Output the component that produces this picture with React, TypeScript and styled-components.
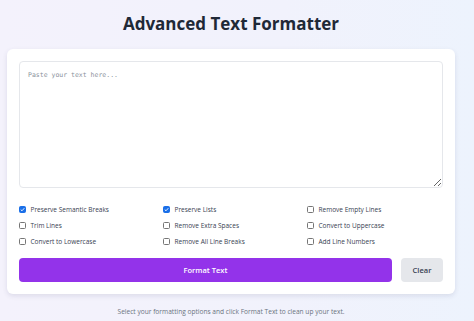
import React, { useState } from 'react';
import styled, { createGlobalStyle } from 'styled-components';

const GlobalStyle = createGlobalStyle`
  html, body {
    margin: 0;
    padding: 0;
  }
  body {
    font-family: "Open Sans", "Noto Sans", sans-serif;
    background: linear-gradient(90deg, #f4f2fc 0%, #f1f2fc 60%, #edf3fd 100%);
    min-height: 321px;
  }
`;

const Page = styled.div`
  width: 448px;
  padding: 0 19px 0 7px;
`;

const Title = styled.h1`
  margin: 0;
  padding: 12px 0 13px;
  font-size: 17px;
  line-height: 24px;
  font-weight: 700;
  text-align: center;
  color: #1f2937;
`;

const Card = styled.div`
  background: #fff;
  border-radius: 6px;
  padding: 12px;
  box-shadow: 0 2px 5px rgba(60, 60, 100, 0.12);
`;

const TextArea = styled.textarea`
  display: block;
  box-sizing: border-box;
  width: 100%;
  height: 127px;
  margin: 0;
  padding: 9px 8px 7px;
  border: 1px solid #e5e7eb;
  border-radius: 4px;
  font-family: "DejaVu Sans Mono", "Liberation Mono", monospace;
  font-size: 6.5px;
  color: #374151;
  outline: none;
  &::placeholder {
    color: #8b929c;
  }
`;

const Options = styled.div`
  display: grid;
  grid-template-columns: repeat(3, 1fr);
  column-gap: 8px;
  margin-top: 13px;
`;

const Option = styled.label`
  display: flex;
  align-items: center;
  gap: 4px;
  height: 16px;
  font-size: 6.5px;
  color: #374151;
  cursor: pointer;
`;

const HiddenInput = styled.input`
  position: absolute;
  opacity: 0;
  width: 0;
  height: 0;
  margin: 0;
`;

const Box = styled.span<{ $checked: boolean }>`
  display: flex;
  align-items: center;
  justify-content: center;
  box-sizing: border-box;
  width: 7px;
  height: 7px;
  margin-right: 0.5px;
  border-radius: 1.5px;
  border: 1px solid ${(p) => (p.$checked ? '#1a6fe8' : '#767676')};
  background: ${(p) => (p.$checked ? '#1a6fe8' : '#fff')};
`;

const Actions = styled.div`
  display: flex;
  gap: 9px;
  margin-top: 9px;
`;

const Button = styled.button<{ $variant?: 'primary' | 'secondary' }>`
  height: 24px;
  border: none;
  border-radius: 4px;
  font-family: inherit;
  font-size: 7.5px;
  font-weight: 600;
  cursor: pointer;
  flex: ${(p) => (p.$variant === 'secondary' ? '0 0 42px' : '1')};
  background: ${(p) => (p.$variant === 'secondary' ? '#e5e7eb' : '#9333ea')};
  color: ${(p) => (p.$variant === 'secondary' ? '#374151' : '#fff')};
`;

const Footer = styled.p`
  margin: 13px 0 0;
  text-align: center;
  font-size: 6.6px;
  color: #6b7280;
`;

const OPTIONS = [
  { key: 'semantic', label: 'Preserve Semantic Breaks', on: true },
  { key: 'lists', label: 'Preserve Lists', on: true },
  { key: 'empty', label: 'Remove Empty Lines', on: false },
  { key: 'trim', label: 'Trim Lines', on: false },
  { key: 'spaces', label: 'Remove Extra Spaces', on: false },
  { key: 'upper', label: 'Convert to Uppercase', on: false },
  { key: 'lower', label: 'Convert to Lowercase', on: false },
  { key: 'breaks', label: 'Remove All Line Breaks', on: false },
  { key: 'numbers', label: 'Add Line Numbers', on: false },
];

export default function App() {
  const [text, setText] = useState('');
  const [opts, setOpts] = useState<Record<string, boolean>>(
    Object.fromEntries(OPTIONS.map((o) => [o.key, o.on]))
  );

  return (
    <>
      <GlobalStyle />
      <Page>
        <Title>Advanced Text Formatter</Title>
        <Card>
          <TextArea
            placeholder="Paste your text here..."
            value={text}
            onChange={(e) => setText(e.target.value)}
          />
          <Options>
            {OPTIONS.map((o) => (
              <Option key={o.key}>
                <HiddenInput
                  type="checkbox"
                  checked={opts[o.key]}
                  onChange={() => setOpts({ ...opts, [o.key]: !opts[o.key] })}
                />
                <Box $checked={opts[o.key]}>
                  {opts[o.key] && (
                    <svg width="5" height="5" viewBox="0 0 10 10">
                      <path d="M1.5 5.2 L4 7.6 L8.6 2.4" fill="none" stroke="#fff" strokeWidth="1.8" />
                    </svg>
                  )}
                </Box>
                {o.label}
              </Option>
            ))}
          </Options>
          <Actions>
            <Button>Format Text</Button>
            <Button $variant="secondary" onClick={() => setText('')}>
              Clear
            </Button>
          </Actions>
        </Card>
        <Footer>Select your formatting options and click Format Text to clean up your text.</Footer>
      </Page>
    </>
  );
}
